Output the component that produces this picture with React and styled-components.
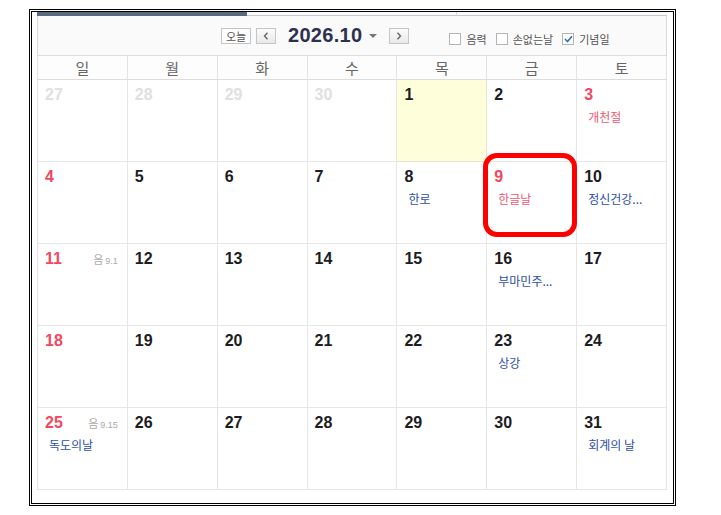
import React from "react"
import styled, { createGlobalStyle } from "styled-components"

const GlobalStyle = createGlobalStyle`
  html, body {
    margin: 0;
    padding: 0;
    background: #fff;
  }
  body {
    font-family: "Liberation Sans", "Noto Sans CJK KR", sans-serif;
  }
`

const Frame = styled.div`
  box-sizing: border-box;
  width: 647px;
  height: 497px;
  margin: 9px 0 0 29px;
  border: 3px double #000;
  padding: 0 6px 0 5px;
`

const Calendar = styled.div`
  width: 630px;
`

const TabBar = styled.div`
  display: flex;
  height: 4px;
`

const Tab = styled.div`
  flex: 1;
  box-sizing: border-box;
  background: ${(p) => (p.active ? "#5a6a7e" : "#fbfbfb")};
  border-bottom: 1px solid ${(p) => (p.active ? "#5a6a7e" : "#c4cad2")};
  border-right: ${(p) => (p.divider ? "1px solid #d6dade" : "none")};
`

const Toolbar = styled.div`
  box-sizing: border-box;
  height: 39px;
  display: flex;
  align-items: center;
  padding-left: 183px;
  background: #fafafa;
  border-left: 1px solid #dcdcdc;
  border-right: 1px solid #dcdcdc;
`

const TodayButton = styled.button`
  box-sizing: border-box;
  width: 30px;
  height: 16px;
  margin: 1px 5px 0 0;
  padding: 0;
  border: 1px solid #c4c4c4;
  background: #fff;
  color: #555;
  font-family: "Noto Sans CJK KR", sans-serif;
  font-size: 11px;
  line-height: 14px;
`

const ArrowButton = styled.button`
  box-sizing: border-box;
  width: 20px;
  height: 16px;
  margin-top: 1px;
  padding: 0;
  display: flex;
  align-items: center;
  justify-content: center;
  border: 1px solid #c6c6c6;
  background: linear-gradient(#fbfbfb, #e9e9e9);
`

const MonthTitle = styled.div`
  display: flex;
  align-items: center;
  margin: 0 12px;
  color: #2d3150;
  font-size: 20px;
  font-weight: bold;
  letter-spacing: 0.3px;
`

const Caret = styled.span`
  width: 0;
  height: 0;
  margin-left: 7px;
  margin-top: 1px;
  border-left: 4px solid transparent;
  border-right: 4px solid transparent;
  border-top: 4px solid #777;
`

const Options = styled.div`
  display: flex;
  align-items: center;
  margin: 7px 0 0 40px;
`

const Option = styled.label`
  display: flex;
  align-items: center;
  margin-right: 9px;
  color: #555;
  font-family: "Noto Sans CJK KR", sans-serif;
  font-size: 11px;
`

const Box = styled.span`
  box-sizing: border-box;
  width: 12px;
  height: 12px;
  margin-right: 5px;
  display: flex;
  align-items: center;
  justify-content: center;
  border: 1px solid #b4b4b4;
  background: #fff;
`

const Grid = styled.div`
  display: grid;
  grid-template-columns: repeat(7, 1fr);
  border-top: 1px solid #dcdcdc;
  border-left: 1px solid #e3e3e3;
`

const DayName = styled.div`
  height: 23px;
  line-height: 23px;
  text-align: center;
  color: #666;
  font-family: "Noto Sans CJK KR", sans-serif;
  font-size: 15px;
  background: #fdfdfd;
  border-right: 1px solid #e3e3e3;
  border-bottom: 1px solid #dcdcdc;
`

const Cell = styled.div`
  position: relative;
  height: 82px;
  padding: 5px 0 0;
  box-sizing: border-box;
  background: ${(p) => (p.today ? "#fefedb" : "#fff")};
  border-right: 1px solid ${(p) => (p.today ? "#e6e6c4" : "#e6e6e6")};
  border-bottom: 1px solid ${(p) => (p.today ? "#e6e6c4" : "#e6e6e6")};
`

const NumberRow = styled.div`
  display: flex;
  align-items: center;
  justify-content: space-between;
  height: 20px;
  padding: 0 9px 0 7px;
`

const DayNumber = styled.span`
  font-size: 16px;
  font-weight: bold;
  color: ${(p) => p.color};
`

const Lunar = styled.span`
  color: #aaa;
  font-family: "Noto Sans CJK KR", sans-serif;
  font-size: 11px;
  small {
    font-family: "Liberation Sans", sans-serif;
    font-size: 9px;
    margin-left: 2px;
  }
`

const Event = styled.div`
  margin-top: 4px;
  padding-left: 11px;
  line-height: 16px;
  font-family: "Noto Sans CJK KR", sans-serif;
  font-size: 12px;
  color: ${(p) => (p.holiday ? "#ee5a74" : "#2d4ea8")};
  white-space: nowrap;
`

const Marker = styled.div`
  position: absolute;
  left: -4px;
  top: -9px;
  width: 94px;
  height: 84px;
  box-sizing: border-box;
  border: 5px solid #ff0000;
  border-radius: 14px;
  pointer-events: none;
`

const DAYS = ["일", "월", "화", "수", "목", "금", "토"]

const RED = "#f2475f"
const DIM = "#e0e0e0"
const INK = "#1c1c22"

const weeks = [
  [
    { d: 27, dim: true },
    { d: 28, dim: true },
    { d: 29, dim: true },
    { d: 30, dim: true },
    { d: 1, today: true },
    { d: 2 },
    { d: 3, red: true, events: [{ t: "개천절", holiday: true }] },
  ],
  [
    { d: 4 },
    { d: 5 },
    { d: 6 },
    { d: 7 },
    { d: 8, events: [{ t: "한로" }] },
    { d: 9, red: true, marked: true, events: [{ t: "한글날", holiday: true }] },
    { d: 10, events: [{ t: "정신건강..." }] },
  ],
  [
    { d: 11, lunar: "9.1" },
    { d: 12 },
    { d: 13 },
    { d: 14 },
    { d: 15 },
    { d: 16, events: [{ t: "부마민주..." }] },
    { d: 17 },
  ],
  [
    { d: 18 },
    { d: 19 },
    { d: 20 },
    { d: 21 },
    { d: 22 },
    { d: 23, events: [{ t: "상강" }] },
    { d: 24 },
  ],
  [
    { d: 25, lunar: "9.15", events: [{ t: "독도의날" }] },
    { d: 26 },
    { d: 27 },
    { d: 28 },
    { d: 29 },
    { d: 30 },
    { d: 31, events: [{ t: "회계의 날" }] },
  ],
]

const Chevron = ({ dir }) => (
  <svg width="6" height="8" viewBox="0 0 6 8">
    <path
      d={dir === "left" ? "M4.5 0.8 L1.5 4 L4.5 7.2" : "M1.5 0.8 L4.5 4 L1.5 7.2"}
      fill="none"
      stroke="#666"
      strokeWidth="1.4"
    />
  </svg>
)

const Check = () => (
  <svg width="9" height="8" viewBox="0 0 9 8">
    <path d="M1 4 L3.5 6.5 L8 1.2" fill="none" stroke="#2f6fc4" strokeWidth="1.6" />
  </svg>
)

const dayColor = (day, col) => {
  if (day.dim) return DIM
  if (day.red || col === 0) return RED
  return INK
}

const App = () => {
  return (
    <>
      <GlobalStyle />
      <Frame>
        <Calendar>
          <TabBar>
            <Tab active />
            <Tab divider />
            <Tab />
          </TabBar>
          <Toolbar>
            <TodayButton>오늘</TodayButton>
            <ArrowButton>
              <Chevron dir="left" />
            </ArrowButton>
            <MonthTitle>
              2026.10
              <Caret />
            </MonthTitle>
            <ArrowButton>
              <Chevron dir="right" />
            </ArrowButton>
            <Options>
              <Option>
                <Box />
                음력
              </Option>
              <Option>
                <Box />
                손없는날
              </Option>
              <Option>
                <Box>
                  <Check />
                </Box>
                기념일
              </Option>
            </Options>
          </Toolbar>
          <Grid>
            {DAYS.map((name) => (
              <DayName key={name}>{name}</DayName>
            ))}
            {weeks.map((week, w) =>
              week.map((day, i) => (
                <Cell key={`${w}-${i}`} today={day.today}>
                  <NumberRow>
                    <DayNumber color={dayColor(day, i)}>{day.d}</DayNumber>
                    {day.lunar && (
                      <Lunar>
                        음<small>{day.lunar}</small>
                      </Lunar>
                    )}
                  </NumberRow>
                  {(day.events || []).map((ev) => (
                    <Event key={ev.t} holiday={ev.holiday}>
                      {ev.t}
                    </Event>
                  ))}
                  {day.marked && <Marker />}
                </Cell>
              ))
            )}
          </Grid>
        </Calendar>
      </Frame>
    </>
  )
}

export default App
